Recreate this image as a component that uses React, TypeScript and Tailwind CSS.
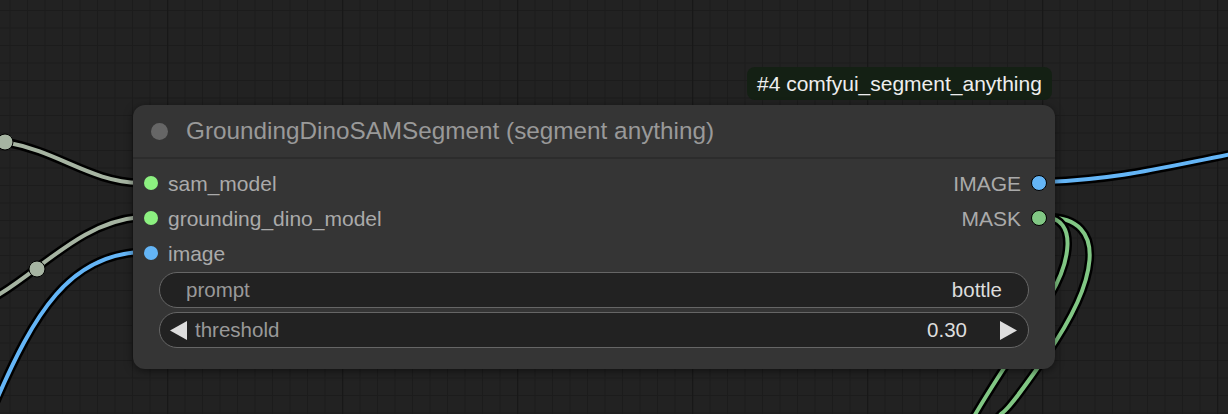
import React from 'react';

const FONT = "font-['Liberation_Sans',Arial,sans-serif]";

interface Slot {
  name: string;
  color: string;
}

const inputs: Slot[] = [
  { name: 'sam_model', color: '#8cf080' },
  { name: 'grounding_dino_model', color: '#8cf080' },
  { name: 'image', color: '#64b5f6' },
];

const outputs: (Slot | null)[] = [
  { name: 'IMAGE', color: '#64b5f6' },
  { name: 'MASK', color: '#81c784' },
  null,
];

const Wire = ({ d, color }: { d: string; color: string }) => (
  <g fill="none" strokeLinecap="round">
    <path d={d} stroke="#000" strokeWidth={9} />
    <path d={d} stroke={color} strokeWidth={4} />
  </g>
);

const Canvas = () => (
  <svg className="absolute inset-0" width={1228} height={414}>
    <defs>
      <pattern id="minor" width={17.5} height={17.5} patternUnits="userSpaceOnUse" patternTransform="translate(9.5 10)">
        <path d="M0 0H17.5M0 0V17.5" stroke="#1c1c1c" strokeWidth={2} fill="none" />
      </pattern>
      <pattern id="major" width={175} height={175} patternUnits="userSpaceOnUse" patternTransform="translate(167 10)">
        <path d="M0 0V175" stroke="#181818" strokeWidth={2.5} fill="none" />
      </pattern>
    </defs>
    <rect width={1228} height={414} fill="#222" />
    <rect width={1228} height={414} fill="url(#minor)" />
    <rect width={1228} height={414} fill="url(#major)" />

    <Wire d="M5 142 C60 152 90 182 140 183" color="#a6b4a2" />
    <Wire d="M-10 300 C40 272 80 222 140 217" color="#a6b4a2" />
    <Wire d="M-6 406 C35 310 70 256 140 252" color="#64b5f6" />
    <Wire d="M1046 182 C1120 179 1160 168 1232 154" color="#64b5f6" />
    <Wire d="M1046 217 C1112 218 1096 284 1046 356 S1008 404 996 420" color="#81c784" />
    <Wire d="M1046 217 C1078 220 1070 262 1050 296 S992 384 972 420" color="#81c784" />

    <circle cx={5} cy={142} r={8} fill="#a6b4a2" stroke="#000" strokeWidth={1} />
    <circle cx={37} cy={269} r={8} fill="#a6b4a2" stroke="#000" strokeWidth={1} />
  </svg>
);

const Arrow = ({ dir }: { dir: 'left' | 'right' }) => (
  <svg width={17} height={19} viewBox="0 0 17 19" className="shrink-0">
    <polygon points={dir === 'left' ? '17,0 17,19 0,9.5' : '0,0 0,19 17,9.5'} fill="#ddd" />
  </svg>
);

export default function App() {
  return (
    <div className={`relative w-[1228px] h-[414px] overflow-hidden bg-[#222] ${FONT}`}>
      <Canvas />

      <div className="absolute left-[747px] top-[67px] h-[33px] px-[10px] flex items-center rounded-[8px] bg-[#142014] text-[21px] text-[#eee]">
        #4 comfyui_segment_anything
      </div>

      <div className="absolute left-[133px] top-[105px] w-[922px] h-[264px] rounded-[12px] bg-[#353535] shadow-[0_2px_8px_rgba(0,0,0,0.5)] flex flex-col">
        <div className="h-[54px] shrink-0 flex items-center pl-[18px] gap-[18px] border-b-2 border-[#2c2c2c]">
          <span className="w-[17px] h-[17px] rounded-full bg-[#666]" />
          <span className="text-[24.3px] text-[#999] leading-none">GroundingDinoSAMSegment (segment anything)</span>
        </div>

        <div className="pt-[6px] flex flex-col">
          {inputs.map((slot, i) => {
            const out = outputs[i];
            return (
              <div key={slot.name} className="h-[35px] flex items-center justify-between">
                <div className="flex items-center pl-[11px] gap-[10px]">
                  <span className="w-[14px] h-[14px] rounded-full" style={{ backgroundColor: slot.color }} />
                  <span className="text-[21px] text-[#aaa] leading-none pt-[1px]">{slot.name}</span>
                </div>
                {out && (
                  <div className="flex items-center pr-[8px] gap-[10px]">
                    <span className="text-[21px] text-[#aaa] leading-none pt-[1px]">{out.name}</span>
                    <span className="w-[16px] h-[16px] rounded-full border-[1.5px] border-black" style={{ backgroundColor: out.color }} />
                  </div>
                )}
              </div>
            );
          })}
        </div>

        <div className="mt-[2px] mx-[26px] flex flex-col gap-[4px]">
          <div className="h-[36px] rounded-full border border-[#666] bg-[#222] flex items-center justify-between px-[26px] text-[20.5px] leading-none">
            <span className="text-[#999] pt-[1px]">prompt</span>
            <span className="text-[#ddd] pt-[1px]">bottle</span>
          </div>
          <div className="h-[36px] rounded-full border border-[#666] bg-[#222] flex items-center pl-[10px] pr-[11px] text-[20.5px] leading-none">
            <Arrow dir="left" />
            <span className="ml-[8px] text-[#999] pt-[1px]">threshold</span>
            <span className="ml-auto text-[#ddd] pt-[1px]">0.30</span>
            <span className="ml-[33px] flex"><Arrow dir="right" /></span>
          </div>
        </div>
      </div>
    </div>
  );
}
